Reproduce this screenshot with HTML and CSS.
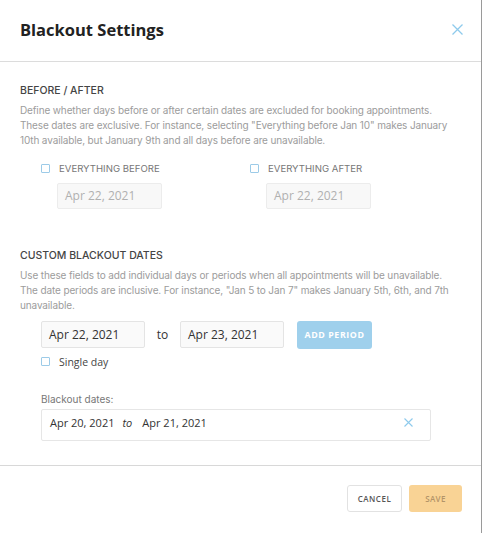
FILE: index.html
```html
<!DOCTYPE html>
<html lang="en">
<head>
<meta charset="utf-8">
<title>Blackout Settings</title>
<link rel="stylesheet" href="styles.css">
</head>
<body>
<div class="modal">
  <header class="modal-header">
    <h1 class="modal-title">Blackout Settings</h1>
    <button class="close-btn" aria-label="Close">
      <svg width="11" height="11" viewBox="0 0 11 11"><path d="M0.5 0.5L10.5 10.5M10.5 0.5L0.5 10.5" stroke="#8ecaec" stroke-width="1.3" fill="none"/></svg>
    </button>
  </header>
  <main class="modal-body">
    <section class="section">
      <h2 class="section-title">BEFORE / AFTER</h2>
      <p class="section-desc">Define whether days before or after certain dates are excluded for booking appointments. These dates are exclusive. For instance, selecting "Everything before Jan 10" makes January 10th available, but January 9th and all days before are unavailable.</p>
      <div class="range-options">
        <div class="range-option">
          <label class="check-row"><span class="checkbox"></span><span class="check-label upper">EVERYTHING BEFORE</span></label>
          <div class="date-input disabled">Apr 22, 2021</div>
        </div>
        <div class="range-option">
          <label class="check-row"><span class="checkbox"></span><span class="check-label upper">EVERYTHING AFTER</span></label>
          <div class="date-input disabled">Apr 22, 2021</div>
        </div>
      </div>
    </section>
    <section class="section custom">
      <h2 class="section-title">CUSTOM BLACKOUT DATES</h2>
      <p class="section-desc">Use these fields to add individual days or periods when all appointments will be unavailable. The date periods are inclusive. For instance, "Jan 5 to Jan 7" makes January 5th, 6th, and 7th unavailable.</p>
      <div class="custom-fields">
        <div class="period-row">
          <div class="date-input">Apr 22, 2021</div>
          <span class="to">to</span>
          <div class="date-input">Apr 23, 2021</div>
          <button class="btn btn-add">ADD PERIOD</button>
        </div>
        <label class="check-row single"><span class="checkbox"></span><span class="check-label">Single day</span></label>
        <div class="blackout-label">Blackout dates:</div>
        <div class="blackout-list">
          <div class="blackout-item">
            <span class="bd-date">Apr 20, 2021</span>
            <span class="bd-to">to</span>
            <span class="bd-date">Apr 21, 2021</span>
            <span class="bd-remove">
              <svg width="9" height="9" viewBox="0 0 9 9"><path d="M0.5 0.5L8.5 8.5M8.5 0.5L0.5 8.5" stroke="#8ecaec" stroke-width="1.1" fill="none"/></svg>
            </span>
          </div>
        </div>
      </div>
    </section>
  </main>
  <footer class="modal-footer">
    <button class="btn btn-cancel">CANCEL</button>
    <button class="btn btn-save">SAVE</button>
  </footer>
</div>
</body>
</html>
```
FILE: styles.css
```css
* { box-sizing: border-box; }
html, body { margin: 0; padding: 0; background: #fff; }
body { font-family: "Open Sans", "Liberation Sans", sans-serif; color: #333; }

.modal {
  width: 482px;
  height: 533px;
  border-right: 1px solid #9a9a9a;
  background: #fff;
  display: flex;
  flex-direction: column;
}

.modal-header {
  height: 62px;
  border-bottom: 1px solid #dcdcdc;
  display: flex;
  align-items: center;
  justify-content: space-between;
  padding: 0 18px 1px 20px;
}
.modal-title {
  margin: 0;
  font-size: 16.5px;
  font-weight: 700;
  color: #222;
  letter-spacing: 0;
}
.close-btn {
  border: 0;
  background: none;
  padding: 0;
  width: 11px;
  height: 11px;
  display: flex;
}

.modal-body {
  padding: 21px 20px 0 20px;
  height: 404px;
}

.section-title {
  margin: 0;
  font-family: Inter, "Noto Sans", sans-serif;
  font-size: 10.5px;
  font-weight: 500;
  line-height: 16px;
  color: #444;
}
.section-desc {
  margin: 4px 0 0 0;
  font-family: Inter, "Noto Sans", sans-serif;
  font-size: 10px;
  letter-spacing: -0.13px;
  line-height: 15px;
  color: #9c9c9c;
}

.range-options {
  display: flex;
  padding-left: 21px;
  margin-top: 14px;
}
.range-option { width: 209px; }

.check-row {
  display: flex;
  align-items: center;
  gap: 9px;
  height: 14px;
}
.checkbox {
  width: 9px;
  height: 9px;
  border: 1px solid #9ccbe8;
  border-radius: 1px;
  background: #fff;
  flex: none;
}
.check-label {
  font-family: Inter, "Noto Sans", sans-serif;
  font-size: 9.6px;
  color: #777;
}

.date-input {
  width: 105px;
  height: 26px;
  border: 1px solid #e4e4e4;
  border-radius: 2px;
  background: #fafafa;
  font-size: 12px;
  color: #333;
  display: flex;
  align-items: center;
  padding-left: 7px;
}
.range-option .date-input { margin: 7px 0 0 16px; }
.date-input.disabled { color: #b0b0b0; background: #f8f8f8; border-color: #ececec; }

.section.custom { margin-top: 39px; }

.custom-fields { padding-left: 21px; }
.period-row {
  display: flex;
  align-items: center;
  margin-top: 8px;
}
.period-row .date-input { width: 104px; height: 27px; }
.to {
  width: 35px;
  text-align: center;
  font-size: 12px;
  color: #333;
}
.btn {
  font-family: "Open Sans", "Liberation Sans", sans-serif;
  border-radius: 3px;
  cursor: pointer;
  padding: 0;
}
.btn-add {
  margin-left: 13px;
  width: 75px;
  height: 28px;
  border: 0;
  background: #9fd0ec;
  color: #fff;
  font-size: 8.8px;
  font-weight: 700;
  letter-spacing: 0.6px;
}

.check-row.single { margin-top: 6px; }
.check-row.single .check-label {
  font-family: "Open Sans", sans-serif;
  font-size: 10.5px;
  color: #444;
}

.blackout-label {
  margin-top: 23px;
  font-family: Inter, "Noto Sans", sans-serif;
  font-size: 10px;
  color: #777;
  line-height: 14px;
}
.blackout-list {
  margin-top: 3px;
  width: 390px;
  height: 32px;
  border: 1px solid #e6e6e6;
  border-radius: 2px;
}
.blackout-item {
  display: flex;
  align-items: center;
  height: 26px;
  padding: 0 17px 0 8px;
  font-size: 11px;
  color: #333;
}
.bd-to { font-style: italic; margin: 0 10px 0 8px; }
.bd-remove { margin-left: auto; display: flex; }

.modal-footer {
  margin-top: auto;
  height: 68px;
  border-top: 1px solid #d8d8d8;
  display: flex;
  justify-content: flex-end;
  align-items: flex-start;
  gap: 7px;
  padding: 19px 19px 0 0;
}
.btn-cancel {
  width: 55px;
  height: 27px;
  border: 1px solid #e2e2e2;
  background: #fff;
  color: #555;
  font-size: 8px;
  font-weight: 600;
  letter-spacing: 0.5px;
}
.btn-save {
  width: 53px;
  height: 27px;
  border: 0;
  background: #f9d395;
  color: #b39468;
  font-size: 8px;
  font-weight: 600;
  letter-spacing: 0.4px;
}
```
